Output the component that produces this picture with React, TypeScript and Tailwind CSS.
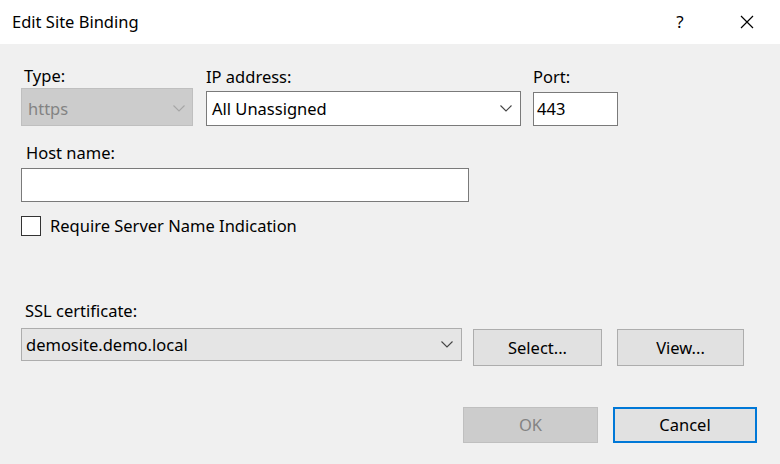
import React from "react";

const font = { fontFamily: '"Noto Sans", "Open Sans", sans-serif' };

function Chevron({ color }: { color: string }) {
  return (
    <svg width="12" height="7" viewBox="0 0 12 7" className="shrink-0">
      <path d="M0.5 0.5 L6 6 L11.5 0.5" fill="none" stroke={color} strokeWidth="1.1" />
    </svg>
  );
}

export default function App() {
  return (
    <div
      className="w-[780px] h-[464px] bg-[#f0f0f0] flex flex-col text-black text-[16.5px] leading-[20px]"
      style={font}
    >
      {/* Title bar */}
      <div className="h-[44px] bg-white flex items-center pl-[12px] shrink-0">
        <span className="text-[16.5px] flex-1">Edit Site Binding</span>
        <span className="text-[17px] w-[20px] text-center mr-[50px]">?</span>
        <svg width="14" height="14" viewBox="0 0 14 14" className="mr-[26px]">
          <path d="M1 1 L13 13 M13 1 L1 13" stroke="#000" strokeWidth="1.2" fill="none" />
        </svg>
      </div>

      <div className="flex flex-col pl-[21px]">
        {/* Row 1 */}
        <div className="flex items-end mt-[22px]">
          <div className="flex flex-col w-[172px]">
            <span className="pl-[3px] mb-[2px]">Type:</span>
            <div className="h-[38px] bg-[#cccccc] border border-[#bfbfbf] flex items-center pl-[6px] pr-[7px] pt-[3px] text-[#838383]">
              <span className="flex-1">https</span>
              <Chevron color="#a6a6a6" />
            </div>
          </div>
          <div className="flex flex-col w-[315px] ml-[13px]">
            <span className="mb-[4px]">IP address:</span>
            <div className="h-[35px] bg-white border border-[#7a7a7a] flex items-center pl-[5px] pr-[8px]">
              <span className="flex-1">All Unassigned</span>
              <Chevron color="#444" />
            </div>
          </div>
          <div className="flex flex-col w-[85px] ml-[12px]">
            <span className="mb-[5px]">Port:</span>
            <div className="h-[34px] bg-white border border-[#7a7a7a] flex items-center pl-[3px]">
              <span>443</span>
            </div>
          </div>
        </div>

        {/* Host name */}
        <span className="pl-[5px] mt-[17px]">Host name:</span>
        <div className="w-[448px] h-[34px] bg-white border border-[#7a7a7a] mt-[5px]" />

        {/* Checkbox */}
        <div className="flex items-center mt-[14px]">
          <div className="w-[20px] h-[20px] bg-white border border-[#333333]" />
          <span className="ml-[9px]">Require Server Name Indication</span>
        </div>

        {/* SSL */}
        <span className="pl-[4px] mt-[65px]">SSL certificate:</span>
        <div className="flex items-start mt-[7px]">
          <div className="w-[441px] h-[33px] bg-[#e5e5e5] border border-[#adadad] flex items-center pl-[4px] pr-[8px]">
            <span className="flex-1">demosite.demo.local</span>
            <Chevron color="#444" />
          </div>
          <button className="w-[129px] h-[37px] ml-[11px] mt-[1px] bg-[#e1e1e1] border border-[#adadad] flex items-center justify-center">
            Select...
          </button>
          <button className="w-[127px] h-[37px] ml-[15px] mt-[1px] bg-[#e1e1e1] border border-[#adadad] flex items-center justify-center">
            View...
          </button>
        </div>

        {/* OK / Cancel */}
        <div className="flex mt-[41px] pl-[442px]">
          <button className="w-[135px] h-[36px] bg-[#cccccc] border border-[#bfbfbf] text-[#838383] flex items-center justify-center">
            OK
          </button>
          <button className="w-[144px] h-[36px] ml-[15px] bg-[#e1e1e1] border-2 border-[#0078d7] flex items-center justify-center">
            Cancel
          </button>
        </div>
      </div>
    </div>
  );
}
